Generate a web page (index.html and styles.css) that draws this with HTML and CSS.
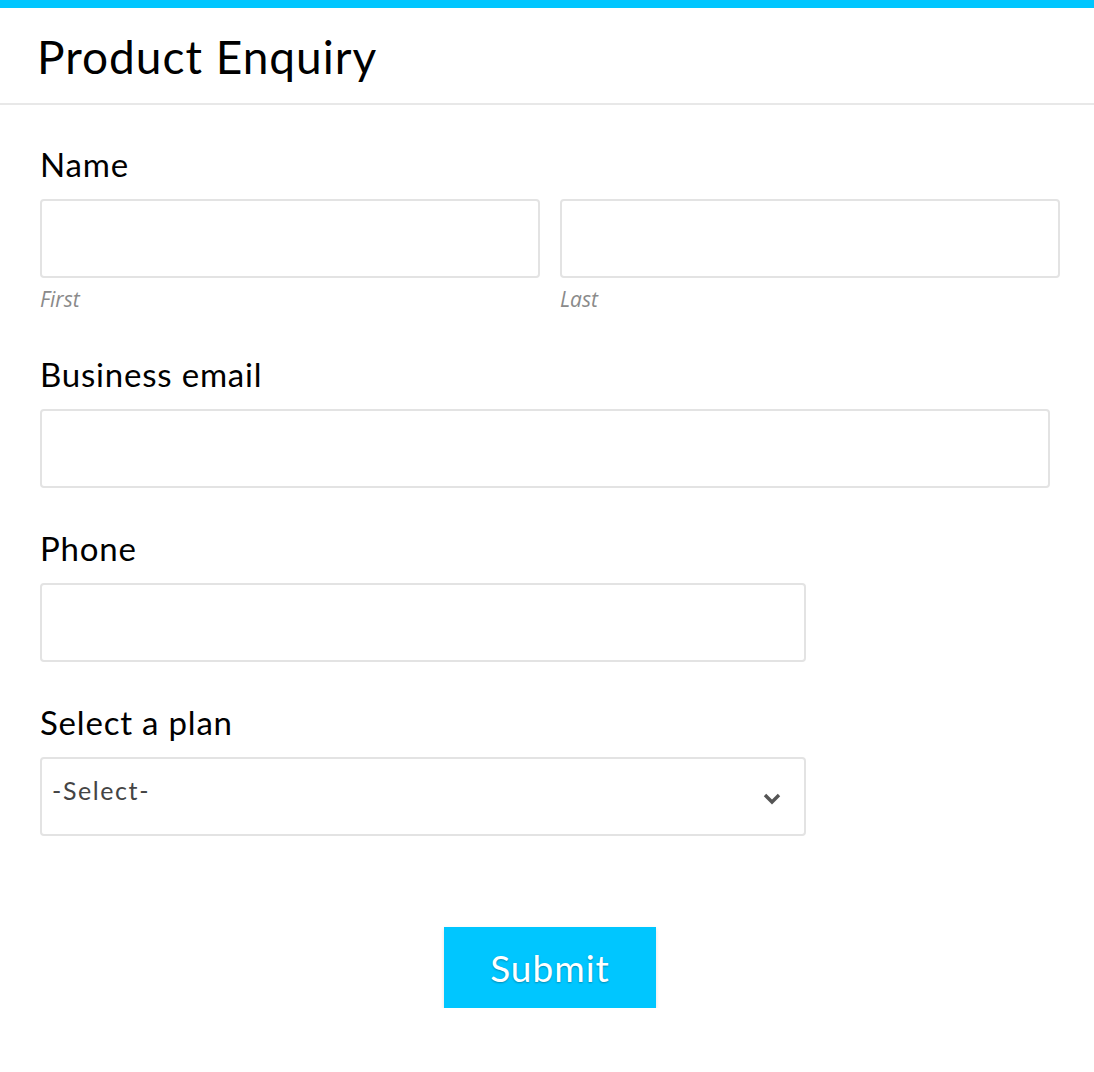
FILE: index.html
```html
<!DOCTYPE html>
<html>
<head>
<meta charset="utf-8">
<link rel="stylesheet" href="styles.css">
</head>
<body>
<div class="page">
  <header class="header">
    <h1 class="title">Product Enquiry</h1>
  </header>
  <form class="form">
    <div class="field field-name">
      <label class="label">Name</label>
      <div class="name-row">
        <div class="sub">
          <input class="input" type="text">
          <span class="hint">First</span>
        </div>
        <div class="sub">
          <input class="input" type="text">
          <span class="hint">Last</span>
        </div>
      </div>
    </div>
    <div class="field">
      <label class="label">Business email</label>
      <input class="input email" type="text">
    </div>
    <div class="field">
      <label class="label">Phone</label>
      <input class="input short" type="text">
    </div>
    <div class="field">
      <label class="label">Select a plan</label>
      <div class="select short">
        <span class="select-text">-Select-</span>
        <svg class="chevron" width="20" height="14" viewBox="0 0 20 14"><path d="M3 3 L10 10 L17 3" fill="none" stroke="#555" stroke-width="3.4"/></svg>
      </div>
    </div>
    <div class="actions">
      <button class="submit" type="button">Submit</button>
    </div>
  </form>
</div>
</body>
</html>
```
FILE: styles.css
```css
html, body {
  margin: 0;
  padding: 0;
  background: #fff;
}
body {
  font-family: "Lato", "Noto Sans", sans-serif;
  color: #111;
}
.page {
  border-top: 8px solid #00c6ff;
}
.header {
  box-sizing: border-box;
  height: 97px;
  border-bottom: 2px solid #e8e8e8;
  padding: 21px 0 0 37px;
}
.title {
  margin: 0;
  font-weight: 400;
  font-size: 46px;
  line-height: 55px;
  color: #000;
  letter-spacing: 1px;
}
.form {
  padding: 39px 34px 0 40px;
}
.field {
  margin-bottom: 40px;
}
.field-name {
  margin-bottom: 42px;
}
.label {
  display: block;
  font-size: 33px;
  line-height: 40px;
  letter-spacing: 0.8px;
  color: #000;
  margin-bottom: 15px;
}
.name-row {
  display: flex;
  gap: 20px;
}
.sub {
  flex: 1;
  display: flex;
  flex-direction: column;
}
.input {
  box-sizing: border-box;
  height: 79px;
  border: 2px solid #e3e3e3;
  border-radius: 4px;
  background: #fff;
  width: 100%;
  margin: 0;
  display: block;
}
.email {
  width: 1010px;
}
.short {
  width: 766px;
}
.hint {
  font-family: "Open Sans", sans-serif;
  font-style: italic;
  font-size: 21px;
  color: #8a8a8a;
  line-height: 26px;
  margin-top: 8px;
}
.select {
  box-sizing: border-box;
  height: 79px;
  border: 2px solid #e3e3e3;
  border-radius: 4px;
  display: flex;
  align-items: flex-start;
  justify-content: space-between;
  padding: 0 22px 0 10px;
}
.select-text {
  font-size: 25px;
  line-height: 30px;
  letter-spacing: 1.6px;
  color: #444;
  margin-top: 16px;
}
.chevron {
  margin-top: 33px;
}
.actions {
  display: flex;
  justify-content: center;
  padding-top: 51px;
}
.submit {
  width: 212px;
  height: 81px;
  border: none;
  background: #00c6ff;
  color: #fff;
  font-family: "Lato", sans-serif;
  font-size: 37px;
  letter-spacing: 1px;
  text-shadow: 0 1px 2px rgba(0,0,0,0.3);
  box-shadow: 0 2px 4px rgba(0,0,0,0.12);
  padding: 0;
}
```
